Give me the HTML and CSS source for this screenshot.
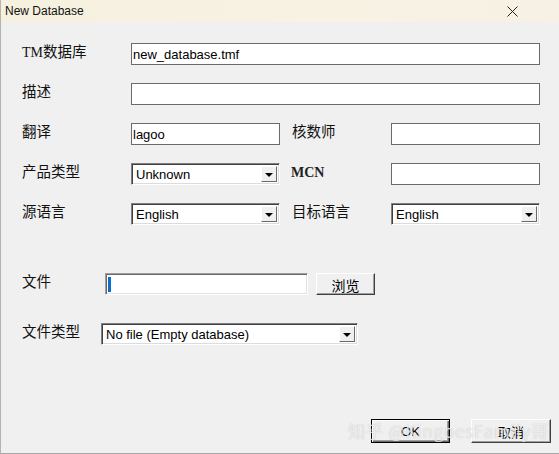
FILE: index.html
```html
<!doctype html>
<html lang="zh-CN">
<head>
    <title>New Database</title>
    <link rel="stylesheet" href="styles.css">
</head>
<body>
    <div class="window">
        <div class="titlebar">
            <span class="title">New Database</span>
            <svg class="close" width="11" height="11" viewBox="0 0 11 11">
                <path d="M0.5 0.5 L10.5 10.5 M10.5 0.5 L0.5 10.5" stroke="#222" stroke-width="1" fill="none"/>
            </svg>
        </div>

        <div class="form">
            <label class="lbl"><span class="latin">TM</span>数据库</label>
            <input class="field span4" type="text" value="new_database.tmf">

            <label class="lbl">描述</label>
            <input class="field span4" type="text" value="">

            <label class="lbl">翻译</label>
            <input class="field" type="text" value="lagoo">
            <span></span>
            <label class="lbl">核数师</label>
            <input class="field" type="text" value="">

            <label class="lbl">产品类型</label>
            <div class="combo"><span class="value">Unknown</span><span class="drop"></span></div>
            <span></span>
            <label class="lbl mcn">MCN</label>
            <input class="field" type="text" value="">

            <label class="lbl">源语言</label>
            <div class="combo"><span class="value">English</span><span class="drop"></span></div>
            <span></span>
            <label class="lbl">目标语言</label>
            <div class="combo"><span class="value">English</span><span class="drop"></span></div>
        </div>

        <div class="file-row">
            <label class="lbl file-lbl">文件</label>
            <div class="file-box"><span class="caret"></span></div>
            <button class="btn browse">浏览</button>
        </div>

        <div class="type-row">
            <label class="lbl type-lbl">文件类型</label>
            <div class="combo wide"><span class="value">No file (Empty database)</span><span class="drop"></span></div>
        </div>

        <div class="footer">
            <button class="btn default">OK</button>
            <button class="btn cancel">取消</button>
            <span class="watermark">知乎 @KingoesFamily哥</span>
        </div>
    </div>
</body>
</html>
```

FILE: styles.css
```css
html, body {
    margin: 0;
    padding: 0;
    background: #f0f0f0;
}
.window {
    position: relative;
    width: 559px;
    height: 454px;
    box-sizing: border-box;
    display: flex;
    flex-direction: column;
    background: #f0f0f0;
    border-left: 1px solid #b4b4b4;
    border-bottom: 1px solid #a8a8a8;
    font-family: "Liberation Sans", "Noto Sans CJK SC", sans-serif;
}
.titlebar {
    height: 22px;
    display: flex;
    align-items: center;
    justify-content: space-between;
    padding: 0 41px 0 4px;
    background: linear-gradient(to right, #f6f0df, #f8f2e3 60%, #f6f1e4);
}
.title {
    font-size: 12px;
    color: #111;
}
.close {
    margin-top: 1px;
}

/* upper block: labels + fields */
.form {
    display: grid;
    grid-template-columns: 109px 149px 12px 99px 149px;
    grid-auto-rows: 22px;
    row-gap: 18px;
    padding: 21px 0 0 21px;
}
.lbl {
    font-family: "Liberation Serif", "Noto Sans CJK SC", serif;
    font-size: 14.5px;
    line-height: 18px;
    height: 18px;
    color: #111;
    white-space: nowrap;
}
.lbl .latin {
    font-size: 14px;
}
.lbl.mcn {
    font-weight: bold;
    font-size: 14px;
    margin-left: -1px;
    line-height: 20px;
    color: #222;
}
.span4 {
    grid-column: 2 / 6;
}
.field {
    box-sizing: border-box;
    height: 22px;
    width: 100%;
    margin: 0;
    padding: 1px 1px 0;
    border: 1px solid #6b6b6b;
    background: #fff;
    font-family: "Liberation Sans", sans-serif;
    font-size: 13px;
    color: #000;
    outline: none;
}

/* combo boxes */
.combo {
    box-sizing: border-box;
    height: 22px;
    display: flex;
    align-items: stretch;
    background: #fff;
    border-top: 1px solid #808080;
    border-left: 1px solid #808080;
    border-right: 1px solid #fff;
    border-bottom: 1px solid #fff;
    box-shadow: inset 1px 1px 0 #404040, inset -1px -1px 0 #dcdcdc;
    padding: 2px;
}
.combo .value {
    flex: 1;
    font-size: 13px;
    line-height: 18px;
    padding-left: 2px;
    color: #000;
    white-space: nowrap;
}
.combo .drop {
    width: 16px;
    background: #f0f0f0;
    box-sizing: border-box;
    border-top: 1px solid #fff;
    border-left: 1px solid #fff;
    border-right: 1px solid #696969;
    border-bottom: 1px solid #696969;
    display: flex;
    align-items: center;
    justify-content: center;
}
.combo .drop::after {
    content: "";
    border-left: 4px solid transparent;
    border-right: 4px solid transparent;
    border-top: 4px solid #000;
    margin-top: 1px;
}

/* file row */
.file-row {
    display: flex;
    align-items: flex-start;
    margin-top: 48px;
    padding-left: 21px;
}
.file-lbl {
    width: 83px;
}
.file-box {
    box-sizing: border-box;
    width: 203px;
    height: 22px;
    background: #fff;
    border-top: 1px solid #a0a0a0;
    border-left: 1px solid #a0a0a0;
    border-right: 1px solid #fff;
    border-bottom: 1px solid #fff;
    box-shadow: inset 1px 1px 0 #696969, inset -1px -1px 0 #e3e3e3;
    padding: 3px 0 0 2px;
}
.caret {
    display: block;
    width: 3px;
    height: 15px;
    background: #0a6fc9;
}
.btn {
    box-sizing: border-box;
    height: 22px;
    margin: 0;
    padding: 0;
    background: #f0f0f0;
    border-top: 1px solid #fff;
    border-left: 1px solid #fff;
    border-right: 1px solid #404040;
    border-bottom: 1px solid #404040;
    box-shadow: inset -1px -1px 0 #a0a0a0;
    font-family: "Liberation Sans", "Noto Sans CJK SC", sans-serif;
    font-size: 14px;
    color: #000;
}
.browse {
    width: 59px;
    margin-left: 8px;
    padding-top: 1px;
}

/* file type row */
.type-row {
    display: flex;
    align-items: flex-start;
    margin-top: 28px;
    padding-left: 21px;
}
.type-lbl {
    width: 79px;
}
.combo.wide {
    width: 257px;
}

/* bottom buttons */
.footer {
    position: relative;
    margin-top: auto;
    display: flex;
    justify-content: flex-end;
    gap: 21px;
    padding: 0 8px 10px 0;
}
.footer .btn {
    height: 24px;
    font-size: 13px;
}
.default {
    width: 79px;
    border: 1px solid #000;
    box-shadow: inset 1px 1px 0 #fff, inset -1px -1px 0 #696969, inset -2px -2px 0 #a0a0a0;
}
.cancel {
    width: 80px;
    font-size: 14px;
}
.watermark {
    position: absolute;
    right: 10px;
    top: 1px;
    font-family: "Noto Sans CJK SC", sans-serif;
    font-size: 17px;
    line-height: 22px;
    letter-spacing: 0.8px;
    color: rgba(255, 255, 255, 0.7);
    text-shadow: 0 0 1px rgba(130, 130, 130, 0.5);
    pointer-events: none;
    white-space: nowrap;
}
```
